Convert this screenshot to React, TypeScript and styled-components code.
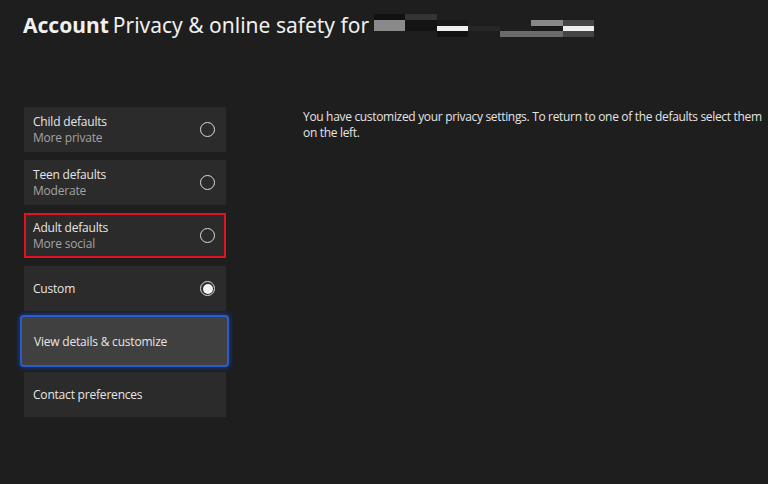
import React from 'react';
import styled, { createGlobalStyle } from 'styled-components';

const GlobalStyle = createGlobalStyle`
  html, body {
    margin: 0;
    padding: 0;
    background: #1e1e1e;
  }
  body {
    font-family: "Open Sans", "Noto Sans", sans-serif;
    color: #e8e8e8;
  }
`;

const Page = styled.div`
  width: 768px;
  height: 484px;
  background: #1e1e1e;
  overflow: hidden;
  box-sizing: border-box;
  padding: 10px 0 0 23px;
`;

const Title = styled.h1`
  margin: 0;
  display: flex;
  align-items: center;
  gap: 5px;
  height: 30px;
  font-family: "Noto Sans", sans-serif;
  font-size: 21px;
  font-weight: 400;
  color: #f0f0f0;
  letter-spacing: 0;
  white-space: nowrap;
`;

const Strong = styled.strong`
  font-weight: 700;
  margin-right: 4px;
`;

const Body = styled.div`
  display: grid;
  grid-template-columns: 202px 1fr;
  column-gap: 77px;
  margin-top: 67px;
  padding-left: 1px;
`;

const OptionList = styled.div`
  display: flex;
  flex-direction: column;
  gap: 8px;
`;

const Card = styled.div<{ $outline?: boolean; $focused?: boolean }>`
  height: 45px;
  box-sizing: border-box;
  display: flex;
  align-items: center;
  justify-content: space-between;
  padding: 0 11px 0 9px;
  background: ${p => (p.$focused ? '#404040' : '#2b2b2b')};
  box-shadow: ${p => (p.$outline ? 'inset 0 0 0 2px #e3121f' : 'none')};
  ${p =>
    p.$focused &&
    `
    height: 52px;
    margin: -4px -3px -3px -4px;
    padding: 0 12px 0 12px;
    border: 2px solid #2b5cc9;
    border-radius: 4px;
    box-shadow: 0 0 4px 1px #163b8f;
  `}
`;

const Labels = styled.div`
  display: flex;
  flex-direction: column;
  line-height: 16px;
`;

const Label = styled.span`
  font-family: "Open Sans", sans-serif;
  font-size: 12px;
  color: #e6e6e6;
  letter-spacing: -0.2px;
`;

const Sub = styled.span`
  font-family: "Open Sans", sans-serif;
  font-size: 12px;
  color: #a3a3a3;
  letter-spacing: -0.2px;
`;

const Radio = styled.span<{ $checked?: boolean }>`
  width: 15px;
  height: 15px;
  box-sizing: border-box;
  border-radius: 50%;
  border: 1.5px solid #dcdcdc;
  display: flex;
  align-items: center;
  justify-content: center;
  &::after {
    content: '';
    display: ${p => (p.$checked ? 'block' : 'none')};
    width: 10px;
    height: 10px;
    border-radius: 50%;
    background: #f2f2f2;
  }
`;

const Description = styled.p`
  margin: 2px 0 0 0;
  font-family: "Open Sans", sans-serif;
  font-size: 12px;
  line-height: 16px;
  color: #e4e4e4;
  letter-spacing: -0.32px;
  max-width: 466px;
`;

const mosaic: [number, number, number, number, string][] = [
  [0, 0, 31, 6, '#111111'],
  [0, 6, 31, 11, '#8a8a8a'],
  [31, 0, 32, 6, '#343434'],
  [31, 6, 32, 11, '#141414'],
  [63, 6, 31, 6, '#181818'],
  [63, 12, 31, 5, '#eeeeee'],
  [63, 17, 31, 6, '#111111'],
  [94, 12, 32, 5, '#262626'],
  [126, 17, 32, 6, '#6b6b6b'],
  [157, 6, 32, 6, '#888888'],
  [157, 12, 32, 5, '#1a1a1a'],
  [157, 17, 32, 6, '#6b6b6b'],
  [189, 6, 31, 6, '#454545'],
  [189, 12, 31, 5, '#eeeeee'],
  [189, 17, 31, 6, '#454545'],
];

const Redacted = () => (
  <svg width="221" height="24" viewBox="0 0 221 24" style={{ marginTop: 2 }}>
    {mosaic.map(([x, y, w, h, c], i) => (
      <rect key={i} x={x} y={y} width={w} height={h} fill={c} />
    ))}
  </svg>
);

const options = [
  { label: 'Child defaults', sub: 'More private' },
  { label: 'Teen defaults', sub: 'Moderate' },
  { label: 'Adult defaults', sub: 'More social', outline: true },
  { label: 'Custom', checked: true },
];

export default function App() {
  return (
    <Page>
      <GlobalStyle />
      <Title>
        <span>
          <Strong>Account</Strong>Privacy &amp; online safety for
        </span>
        <Redacted />
      </Title>
      <Body>
        <OptionList>
          {options.map(o => (
            <Card key={o.label} $outline={o.outline}>
              <Labels>
                <Label>{o.label}</Label>
                {o.sub && <Sub>{o.sub}</Sub>}
              </Labels>
              <Radio $checked={o.checked} />
            </Card>
          ))}
          <Card $focused>
            <Label>View details &amp; customize</Label>
          </Card>
          <Card>
            <Label>Contact preferences</Label>
          </Card>
        </OptionList>
        <Description>
          You have customized your privacy settings. To return to one of the defaults select them on the left.
        </Description>
      </Body>
    </Page>
  );
}
